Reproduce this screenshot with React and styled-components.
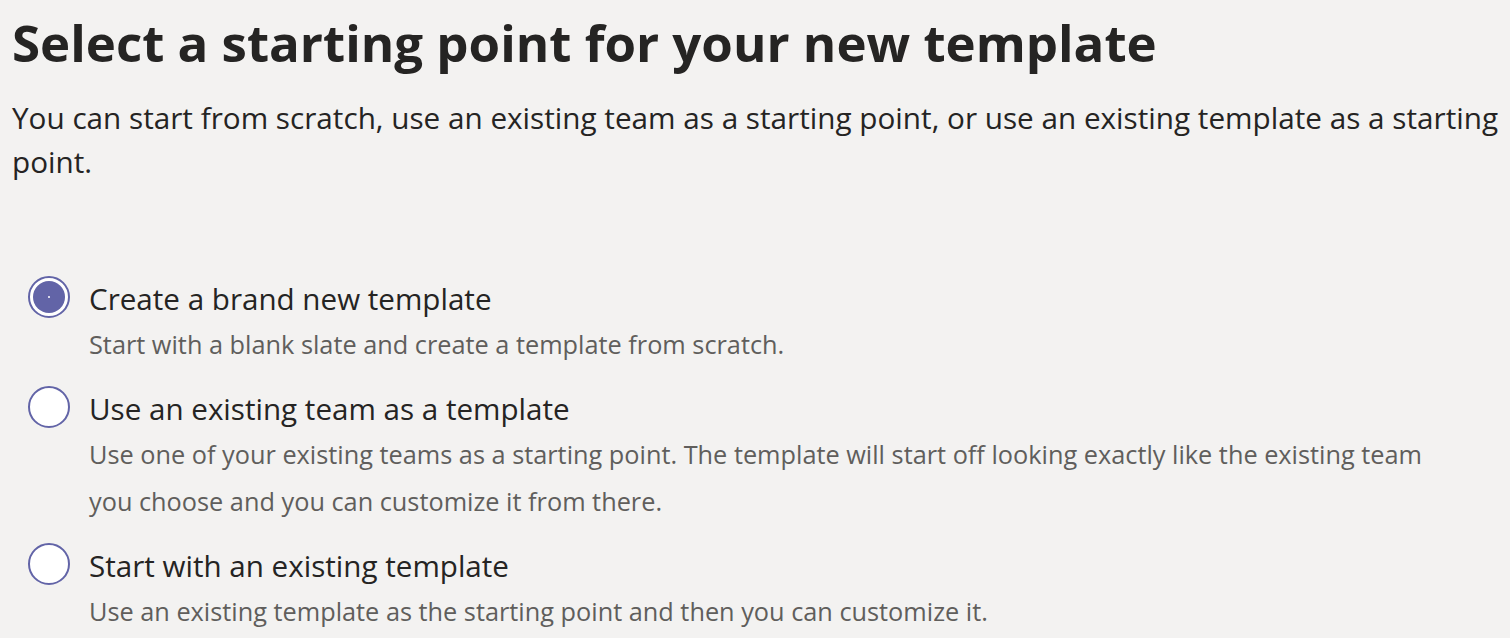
import React, { useState } from "react";
import styled, { createGlobalStyle } from "styled-components";

const Global = createGlobalStyle`
  html, body { margin: 0; padding: 0; background: #f3f2f1; }
  body { font-family: "Open Sans", "Noto Sans", sans-serif; color: #252423; }
`;

const Page = styled.div`
  padding: 0 4px 0 12px;
  display: flex;
  flex-direction: column;
`;

const Heading = styled.h1`
  margin: 6px 0 0;
  font-size: 51px;
  line-height: 72px;
  font-weight: 700;
  color: #252423;
`;

const Intro = styled.p`
  margin: 18px 0 0;
  font-size: 29.7px;
  line-height: 44px;
  color: #252423;
`;

const Options = styled.div`
  margin-top: 92px;
  padding-left: 16px;
  padding-right: 40px;
  display: flex;
  flex-direction: column;
  gap: 18px;
`;

const Option = styled.label`
  display: grid;
  grid-template-columns: 42px 1fr;
  column-gap: 19px;
  cursor: pointer;
`;

const Radio = styled.span`
  width: 42px;
  height: 42px;
  box-sizing: border-box;
  border-radius: 50%;
  border: 2px solid #6264a7;
  background: #ffffff;
  display: flex;
  align-items: center;
  justify-content: center;
`;

const Fill = styled.span`
  width: 32px;
  height: 32px;
  border-radius: 50%;
  background: #6264a7;
  display: flex;
  align-items: center;
  justify-content: center;
`;

const Dot = styled.span`
  width: 2px;
  height: 2px;
  border-radius: 50%;
  background: #ffffff;
`;

const Text = styled.div`
  display: flex;
  flex-direction: column;
`;

const Title = styled.span`
  font-size: 29.6px;
  line-height: 45px;
  color: #252423;
`;

const Desc = styled.span`
  font-size: 25.3px;
  line-height: 47px;
  color: #605e5c;
`;

const items = [
  {
    title: "Create a brand new template",
    desc: "Start with a blank slate and create a template from scratch.",
  },
  {
    title: "Use an existing team as a template",
    desc: "Use one of your existing teams as a starting point. The template will start off looking exactly like the existing team you choose and you can customize it from there.",
  },
  {
    title: "Start with an existing template",
    desc: "Use an existing template as the starting point and then you can customize it.",
  },
];

export default function App() {
  const [sel, setSel] = useState(0);
  return (
    <>
      <Global />
      <Page>
        <Heading>Select a starting point for your new template</Heading>
        <Intro>
          You can start from scratch, use an existing team as a starting point, or use an existing template as a starting point.
        </Intro>
        <Options role="radiogroup">
          {items.map((it, i) => (
            <Option key={i} onClick={() => setSel(i)}>
              <Radio role="radio" aria-checked={sel === i}>
                {sel === i && (
                  <Fill>
                    <Dot />
                  </Fill>
                )}
              </Radio>
              <Text>
                <Title>{it.title}</Title>
                <Desc>{it.desc}</Desc>
              </Text>
            </Option>
          ))}
        </Options>
      </Page>
    </>
  );
}
